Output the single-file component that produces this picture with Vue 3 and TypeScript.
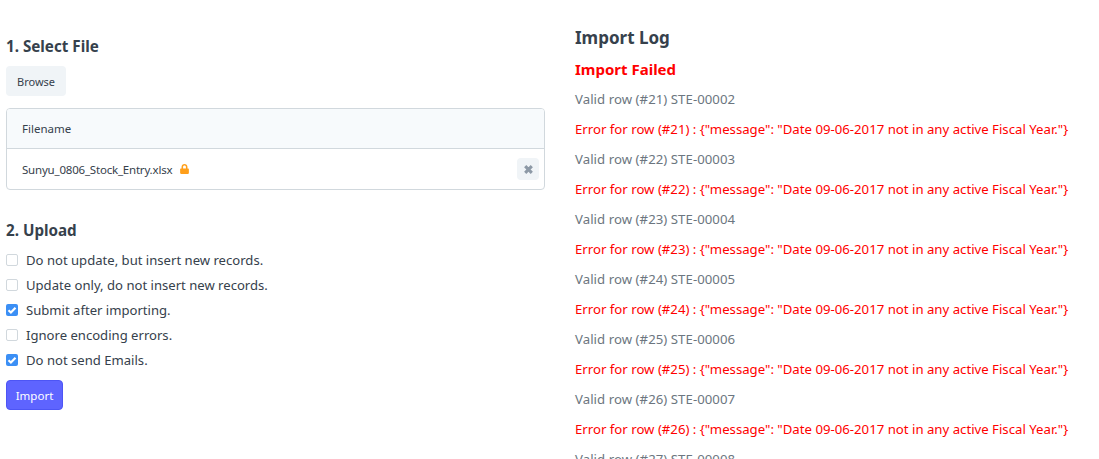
<script setup lang="ts">
interface Opt { label: string; checked: boolean }
const options: Opt[] = [
  { label: 'Do not update, but insert new records.', checked: false },
  { label: 'Update only, do not insert new records.', checked: false },
  { label: 'Submit after importing.', checked: true },
  { label: 'Ignore encoding errors.', checked: false },
  { label: 'Do not send Emails.', checked: true },
]
const rows = [21, 22, 23, 24, 25, 26, 27].map((n, i) => ({
  n,
  ste: 'STE-' + String(i + 2).padStart(5, '0'),
}))
</script>

<template>
  <div class="page">
    <section class="left">
      <h2 class="step first">1. Select File</h2>
      <button class="browse" type="button">Browse</button>
      <div class="table">
        <div class="thead">Filename</div>
        <div class="tbody">
          <span class="fname">Sunyu_0806_Stock_Entry.xlsx</span>
          <svg class="lock" viewBox="0 0 448 512" width="9" height="10"><path fill="#ff9f1a" d="M400 224h-24v-72C376 68 308 0 224 0S72 68 72 152v72H48c-26.500 0-48 21.500-48 48v192c0 26.500 21.500 48 48 48h352c26.500 0 48-21.500 48-48V272c0-26.500-21.500-48-48-48zm-104 0H152v-72c0-39.700 32.300-72 72-72s72 32.300 72 72v72z"/></svg>
          <button class="remove" type="button" aria-label="Remove">
            <svg viewBox="0 0 10 10" width="11" height="11"><path d="M2 2l6 6M8 2l-6 6" stroke="#8d99a6" stroke-width="2.800" fill="none"/></svg>
          </button>
        </div>
      </div>
      <h2 class="step second">2. Upload</h2>
      <div class="opts">
        <label v-for="o in options" :key="o.label" class="opt">
          <span class="box" :class="{ on: o.checked }">
            <svg v-if="o.checked" viewBox="0 0 12 12" width="12" height="12"><path d="M2.500 6.200l2.400 2.300 4.600-4.800" stroke="#fff" stroke-width="2.200" fill="none"/></svg>
          </span>
          <span>{{ o.label }}</span>
        </label>
      </div>
      <button class="import" type="button">Import</button>
    </section>
    <section class="right">
      <h2 class="log-title">Import Log</h2>
      <div class="failed">Import Failed</div>
      <template v-for="r in rows" :key="r.n">
        <div class="row valid">Valid row (#{{ r.n }}) {{ r.ste }}</div>
        <div v-if="r.n < 27" class="row err">Error for row (#{{ r.n }}) : {"message": "Date 09-06-2017 not in any active Fiscal Year."}</div>
      </template>
    </section>
  </div>
</template>

<style>
html, body { margin: 0; background: #fff; overflow: hidden; }
</style>

<style scoped>
.page {
  height: 459px;
  overflow: hidden;
  display: flex;
  font-family: "Noto Sans", "Open Sans", sans-serif;
  color: #36414c;
  box-sizing: border-box;
  padding: 0 6px;
}
.left { width: 539px; flex: none; }
.right { margin-left: 30px; flex: 1; padding-top: 27px; }
.step { margin: 0; font-size: 15.200px; font-weight: 700; line-height: 20px; color: #36414c; }
.first { padding-top: 36px; }
.browse {
  display: block;
  margin-top: 10px;
  width: 60px;
  height: 30px;
  border: 0;
  border-radius: 4px;
  background: #f0f4f7;
  color: #36414c;
  font: 11px "Noto Sans", sans-serif;
  padding: 0;
}
.table {
  margin-top: 12px;
  border: 1px solid #d1d8dd;
  border-radius: 4px;
  height: 82px;
  box-sizing: border-box;
  font-size: 11.500px;
  overflow: hidden;
}
.thead {
  height: 40px;
  background: #f7fafc;
  border-bottom: 1px solid #d1d8dd;
  display: flex;
  align-items: center;
  padding-left: 15px;
  box-sizing: border-box;
}
.tbody {
  display: flex;
  align-items: center;
  height: 40px;
  padding: 0 5px 0 15px;
}
.fname { letter-spacing: -0.2px; }
.lock { margin-left: 8px; }
.remove {
  margin-left: auto;
  width: 22px;
  height: 22px;
  border: 0;
  border-radius: 4px;
  background: #f0f4f7;
  padding: 0;
  display: flex;
  align-items: center;
  justify-content: center;
}
.second { margin-top: 30px; }
.opts { margin-top: 7px; }
.opt {
  display: flex;
  align-items: center;
  height: 25px;
  font-size: 13.100px;
  color: #36414c;
}
.opt > span:last-child { margin-left: 8px; }
.box {
  box-sizing: border-box;
  width: 12px;
  height: 12px;
  border: 1px solid #d1d8dd;
  border-radius: 2px;
  background: #fff;
  display: flex;
  align-items: center;
  justify-content: center;
  flex: none;
}
.box.on { background: #3b8ff5; border: 0; }
.import {
  display: block;
  margin-top: 8px;
  width: 57px;
  height: 30px;
  border: 1px solid #4d55f5;
  border-radius: 4px;
  background: #5e64ff;
  color: #fff;
  font: 11.500px "Noto Sans", sans-serif;
  padding: 0;
}
.log-title { margin: 0; font-size: 17px; font-weight: 700; line-height: 22px; color: #36414c; }
.failed { margin-top: 9px; font-size: 15px; font-weight: 700; line-height: 22px; color: #ff0000; }
.row { font-size: 13.200px; height: 30px; line-height: 30px; white-space: nowrap; }
.failed + .row { margin-top: 4px; }
.valid { color: #6c7680; letter-spacing: 0.05px; }
.err { color: #ff0000; }
</style>
